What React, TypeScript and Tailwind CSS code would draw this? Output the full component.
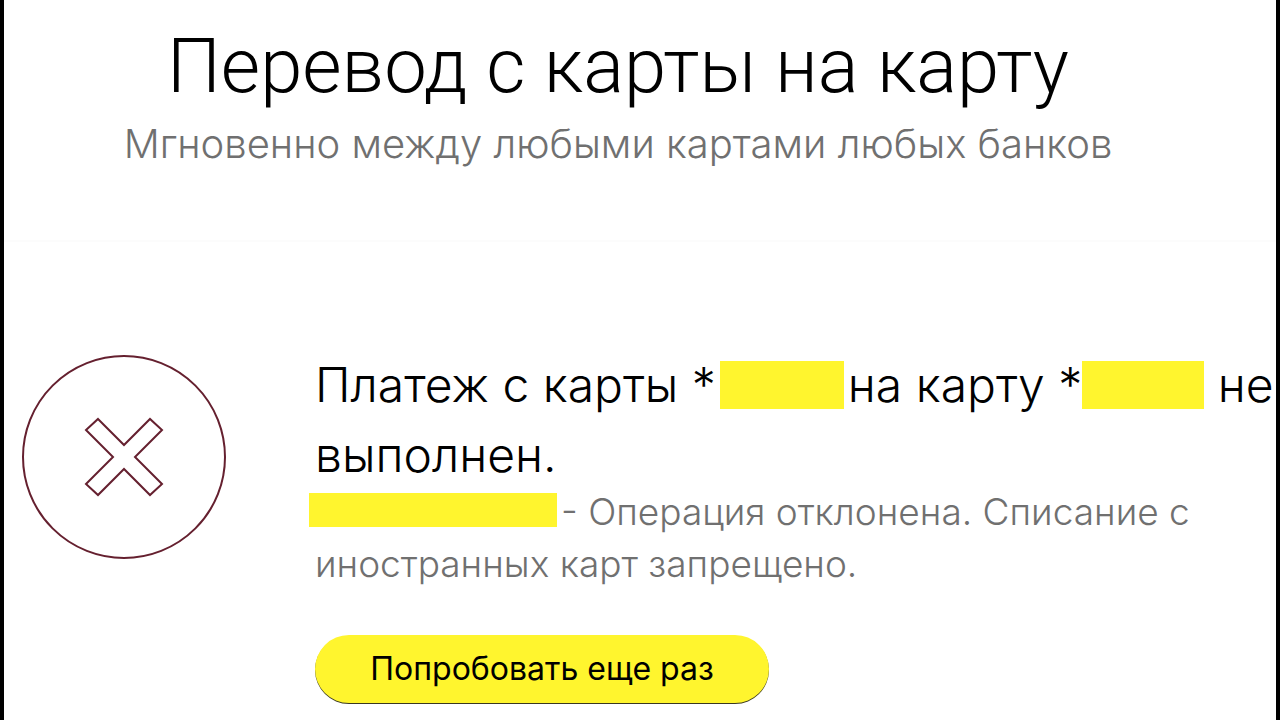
function Redacted({ className }: { className: string }) {
  return <span aria-hidden="true" className={`inline-block bg-[#fff52e] ${className}`} />;
}

export default function App() {
  return (
    <main className="min-h-screen overflow-hidden border-x-4 border-black bg-white font-['Inter','Liberation_Sans',sans-serif] font-light text-black">
      <header className="border-b-2 border-[#fcfcfc] pt-4 pr-11 pb-[68px] text-center">
        <h1 className="font-['Roboto','Noto_Sans',sans-serif] text-[76px] leading-[100px] font-light whitespace-nowrap">
          Перевод с карты на карту
        </h1>
        <p className="text-[40px] leading-[56px] whitespace-nowrap text-[#707070]">
          Мгновенно между любыми картами любых банков
        </p>
      </header>
      <section className="flex items-start gap-[89px] pt-[108px] pl-[18px]">
        <svg
          viewBox="0 0 204 204"
          className="mt-[5px] w-[204px] shrink-0"
          fill="none"
          stroke="#65202f"
          strokeWidth="2"
          aria-hidden="true"
        >
          <circle cx="102" cy="102" r="101" />
          <path d="M76 64L102 90L128 64L140 75L113 102L140 129L128 140L102 114L76 140L64 129L91 102L64 75Z" />
        </svg>
        <div>
          <h2 className="text-[48px] leading-[70px] font-light whitespace-nowrap">
            Платеж с карты *
            <Redacted className="mr-1 ml-1 h-12 w-[124px] align-[-7px]" />
            на карту *
            <Redacted className="h-12 w-[122px] align-[-7px]" /> не
            <br />
            выполнен.
          </h2>
          <p className="mt-[-4px] text-[37px] leading-[52px] whitespace-nowrap text-[#707070]">
            <Redacted className="mr-1 ml-[-6px] h-[34px] w-[248px] align-[-2px]" />
            - Операция отклонена. Списание с
            <br />
            иностранных карт запрещено.
          </p>
          <button
            type="button"
            className="mt-[45px] h-[68px] w-[454px] rounded-full bg-[#fff52e] text-[32px] font-normal shadow-[0_1px_0_#3a3820]"
          >
            Попробовать еще раз
          </button>
        </div>
      </section>
    </main>
  );
}
